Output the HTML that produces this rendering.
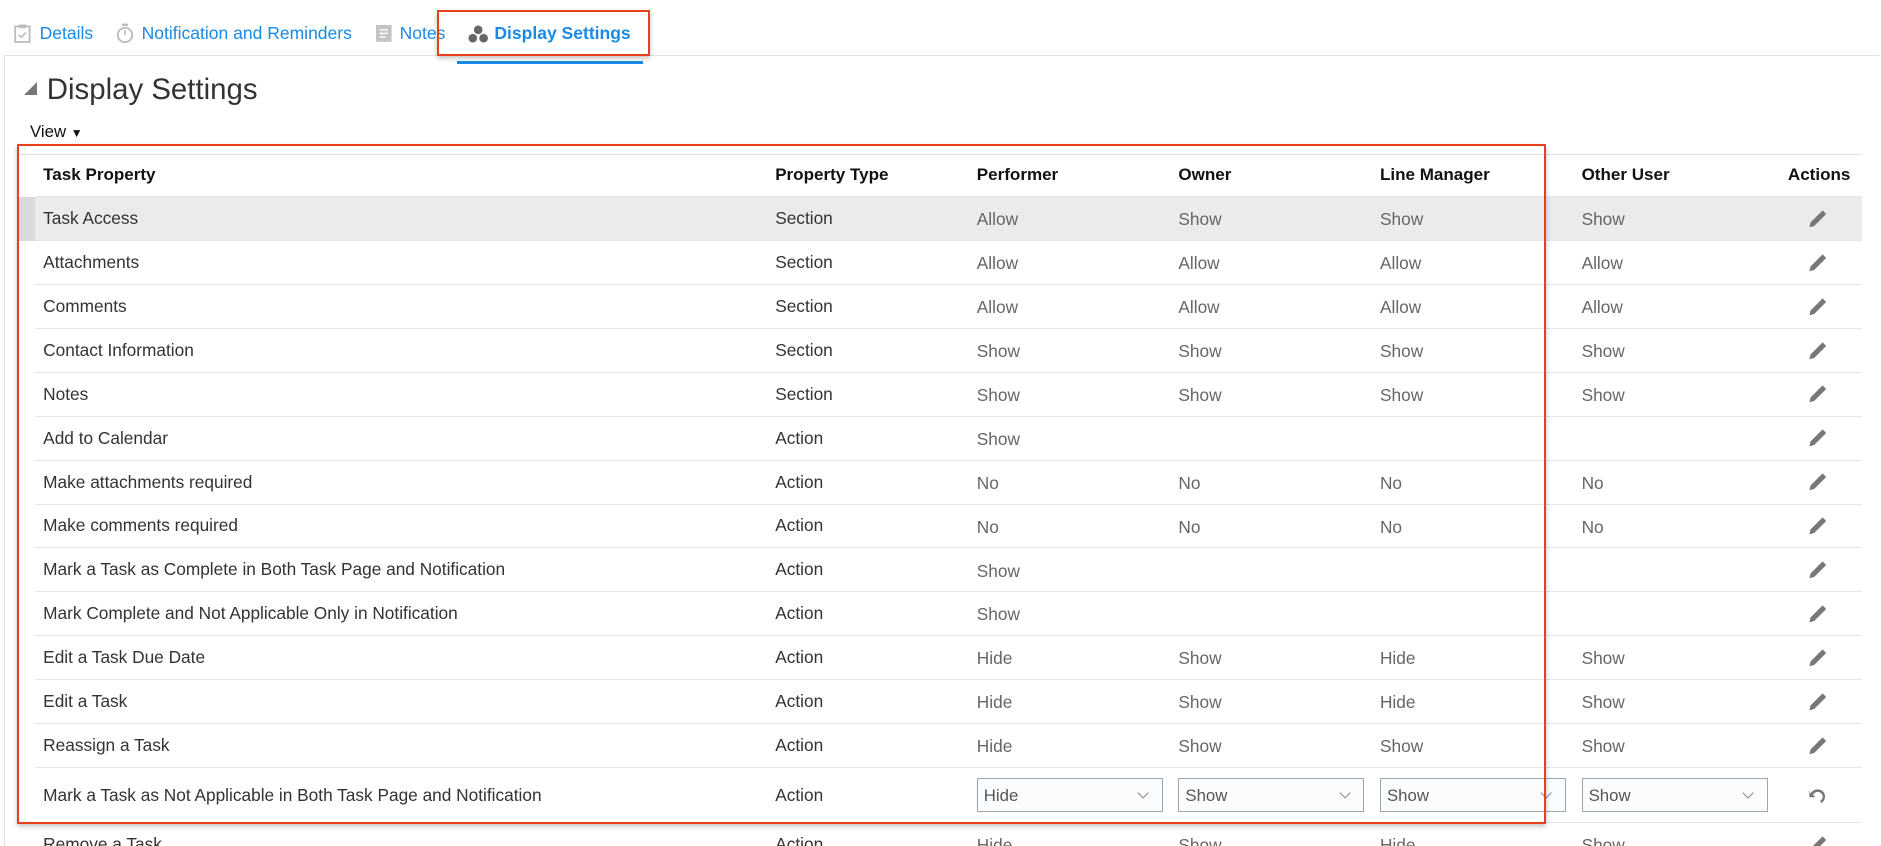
<!DOCTYPE html>
<html><head><style>
html,body{margin:0;padding:0;background:#fff;overflow:hidden}
body{width:1568px;height:705px;zoom:1.2;font-family:"Liberation Sans",Arial,sans-serif;position:relative}
.a{position:absolute;white-space:nowrap}
.tab{color:#1a8ae6;font-size:14.6px;top:19px}
table{position:absolute;left:16px;top:128px;width:1536px;border-collapse:collapse;font-size:14.4px;table-layout:fixed}
td,th{height:36.6px;padding:0;text-align:left;border-bottom:1px solid #e3e6ea;box-sizing:border-box;white-space:nowrap}
th{font-weight:bold;color:#111;height:35.5px;border-top:1px solid #dfe3e8;font-size:14.2px}
td.s,th.s{border-bottom:none}
td.p,th.p{padding-left:7px}
td.p,td.t{color:#333}
td.v{color:#666}
td.v span{position:relative;top:1px}
tr.sel td{background:#eaebed}
tr.sel td.s{background:#d8dadd}
.pen{display:block;margin-left:auto;margin-right:28px;width:18px;height:18px}
.dd{width:155px;height:28px;border:1px solid #9aa6b2;background:#fbfcfd;color:#555;position:relative;box-sizing:border-box;padding:6px 0 0 5px;font-size:14px}
.dd:after{content:"";position:absolute;right:12px;top:8px;width:6px;height:6px;border-right:1px solid #888;border-bottom:1px solid #888;transform:rotate(45deg)}
</style></head><body>
<svg class="a" style="left:12px;top:20px" width="14" height="16"><rect x="1" y="2" width="12" height="13" fill="none" stroke="#bbb" stroke-width="1.5"/><rect x="4" y="0.5" width="6" height="3" fill="#bbb"/><path d="M4 9l2 2 4-4" stroke="#bbb" fill="none" stroke-width="1.3"/></svg>
<div class="a tab" style="left:33px">Details</div>
<svg class="a" style="left:97px;top:19px" width="15" height="17"><circle cx="7.5" cy="10" r="6" fill="none" stroke="#bbb" stroke-width="1.5"/><rect x="5" y="0.5" width="5" height="2" fill="#bbb"/><path d="M7.5 6v4" stroke="#bbb" stroke-width="1.5"/></svg>
<div class="a tab" style="left:118px">Notification and Reminders</div>
<svg class="a" style="left:313px;top:21px" width="14" height="15"><rect x="0" y="0" width="13" height="14" fill="#c4c4c4"/><path d="M3 4h7M3 7h7M3 10h5" stroke="#fff" stroke-width="1.2"/></svg>
<div class="a tab" style="left:333px">Notes</div>
<svg class="a" style="left:390px;top:21px" width="17" height="15"><circle cx="8.5" cy="4" r="3.6" fill="#666"/><circle cx="4" cy="11" r="3.6" fill="#666"/><circle cx="13" cy="11" r="3.6" fill="#666"/></svg>
<div class="a tab" style="left:412px;font-weight:bold">Display Settings</div>
<div class="a" style="left:381px;top:51px;width:155px;height:2px;background:#1a8ae6"></div>
<div class="a" style="left:3px;top:46px;width:1562px;height:670px;border:1px solid #dfe3e8;border-right:none"></div>
<div class="a" style="left:364px;top:8px;width:174px;height:35px;border:2px solid #e8411a;box-shadow:0 2px 4px rgba(0,0,0,.25)"></div>
<div class="a" style="left:20px;top:68px;width:0;height:0;border-left:11px solid transparent;border-bottom:11px solid #777"></div>
<div class="a" style="left:39px;top:61px;font-size:24.5px;color:#333;font-weight:300">Display Settings</div>
<div class="a" style="left:25px;top:102px;font-size:14px;color:#111">View <span style="font-size:10px">&#9660;</span></div>
<table>
<colgroup><col style="width:13px"><col style="width:617px"><col style="width:168px"><col style="width:168px"><col style="width:168px"><col style="width:168px"><col style="width:168px"><col style="width:66px"></colgroup>
<tr><th class="s"></th><th class="p">Task Property</th><th>Property Type</th><th>Performer</th><th>Owner</th><th>Line Manager</th><th>Other User</th><th style="text-align:right;padding-right:10px">Actions</th></tr>
<tr class="sel"><td class="s"></td><td class="p">Task Access</td><td class="t">Section</td><td class="v"><span>Allow</span></td><td class="v"><span>Show</span></td><td class="v"><span>Show</span></td><td class="v"><span>Show</span></td><td><svg class="pen" viewBox="0 0 18 18"><path d="M2 16l1-4L13 2l3 3L6 15z" fill="#777"/></svg></td></tr>
<tr><td class="s"></td><td class="p">Attachments</td><td class="t">Section</td><td class="v"><span>Allow</span></td><td class="v"><span>Allow</span></td><td class="v"><span>Allow</span></td><td class="v"><span>Allow</span></td><td><svg class="pen" viewBox="0 0 18 18"><path d="M2 16l1-4L13 2l3 3L6 15z" fill="#777"/></svg></td></tr>
<tr><td class="s"></td><td class="p">Comments</td><td class="t">Section</td><td class="v"><span>Allow</span></td><td class="v"><span>Allow</span></td><td class="v"><span>Allow</span></td><td class="v"><span>Allow</span></td><td><svg class="pen" viewBox="0 0 18 18"><path d="M2 16l1-4L13 2l3 3L6 15z" fill="#777"/></svg></td></tr>
<tr><td class="s"></td><td class="p">Contact Information</td><td class="t">Section</td><td class="v"><span>Show</span></td><td class="v"><span>Show</span></td><td class="v"><span>Show</span></td><td class="v"><span>Show</span></td><td><svg class="pen" viewBox="0 0 18 18"><path d="M2 16l1-4L13 2l3 3L6 15z" fill="#777"/></svg></td></tr>
<tr><td class="s"></td><td class="p">Notes</td><td class="t">Section</td><td class="v"><span>Show</span></td><td class="v"><span>Show</span></td><td class="v"><span>Show</span></td><td class="v"><span>Show</span></td><td><svg class="pen" viewBox="0 0 18 18"><path d="M2 16l1-4L13 2l3 3L6 15z" fill="#777"/></svg></td></tr>
<tr><td class="s"></td><td class="p">Add to Calendar</td><td class="t">Action</td><td class="v"><span>Show</span></td><td class="v"></td><td class="v"></td><td class="v"></td><td><svg class="pen" viewBox="0 0 18 18"><path d="M2 16l1-4L13 2l3 3L6 15z" fill="#777"/></svg></td></tr>
<tr><td class="s"></td><td class="p">Make attachments required</td><td class="t">Action</td><td class="v"><span>No</span></td><td class="v"><span>No</span></td><td class="v"><span>No</span></td><td class="v"><span>No</span></td><td><svg class="pen" viewBox="0 0 18 18"><path d="M2 16l1-4L13 2l3 3L6 15z" fill="#777"/></svg></td></tr>
<tr><td class="s"></td><td class="p">Make comments required</td><td class="t">Action</td><td class="v"><span>No</span></td><td class="v"><span>No</span></td><td class="v"><span>No</span></td><td class="v"><span>No</span></td><td><svg class="pen" viewBox="0 0 18 18"><path d="M2 16l1-4L13 2l3 3L6 15z" fill="#777"/></svg></td></tr>
<tr><td class="s"></td><td class="p">Mark a Task as Complete in Both Task Page and Notification</td><td class="t">Action</td><td class="v"><span>Show</span></td><td class="v"></td><td class="v"></td><td class="v"></td><td><svg class="pen" viewBox="0 0 18 18"><path d="M2 16l1-4L13 2l3 3L6 15z" fill="#777"/></svg></td></tr>
<tr><td class="s"></td><td class="p">Mark Complete and Not Applicable Only in Notification</td><td class="t">Action</td><td class="v"><span>Show</span></td><td class="v"></td><td class="v"></td><td class="v"></td><td><svg class="pen" viewBox="0 0 18 18"><path d="M2 16l1-4L13 2l3 3L6 15z" fill="#777"/></svg></td></tr>
<tr><td class="s"></td><td class="p">Edit a Task Due Date</td><td class="t">Action</td><td class="v"><span>Hide</span></td><td class="v"><span>Show</span></td><td class="v"><span>Hide</span></td><td class="v"><span>Show</span></td><td><svg class="pen" viewBox="0 0 18 18"><path d="M2 16l1-4L13 2l3 3L6 15z" fill="#777"/></svg></td></tr>
<tr><td class="s"></td><td class="p">Edit a Task</td><td class="t">Action</td><td class="v"><span>Hide</span></td><td class="v"><span>Show</span></td><td class="v"><span>Hide</span></td><td class="v"><span>Show</span></td><td><svg class="pen" viewBox="0 0 18 18"><path d="M2 16l1-4L13 2l3 3L6 15z" fill="#777"/></svg></td></tr>
<tr><td class="s"></td><td class="p">Reassign a Task</td><td class="t">Action</td><td class="v"><span>Hide</span></td><td class="v"><span>Show</span></td><td class="v"><span>Show</span></td><td class="v"><span>Show</span></td><td><svg class="pen" viewBox="0 0 18 18"><path d="M2 16l1-4L13 2l3 3L6 15z" fill="#777"/></svg></td></tr>
<tr><td class="s" style="height:46px"></td><td class="p" style="height:46px">Mark a Task as Not Applicable in Both Task Page and Notification</td><td class="t">Action</td><td><div class="dd">Hide</div></td><td><div class="dd">Show</div></td><td><div class="dd">Show</div></td><td><div class="dd">Show</div></td><td><svg class="pen" viewBox="0 0 18 18"><path d="M3 8c2-4 8-5 11-1 2 3 1 7-2 9l-1-2c2-1 3-4 1-6-2-2-5-2-7 1l2 2H2V5z" fill="#777"/></svg></td></tr>
<tr><td class="s"></td><td class="p">Remove a Task</td><td class="t">Action</td><td class="v"><span>Hide</span></td><td class="v"><span>Show</span></td><td class="v"><span>Hide</span></td><td class="v"><span>Show</span></td><td><svg class="pen" viewBox="0 0 18 18"><path d="M2 16l1-4L13 2l3 3L6 15z" fill="#777"/></svg></td></tr>
</table>
<div class="a" style="left:14px;top:120px;width:1271px;height:563px;border:2px solid #e8411a;box-shadow:0 2px 4px rgba(0,0,0,.25)"></div>
</body></html>
